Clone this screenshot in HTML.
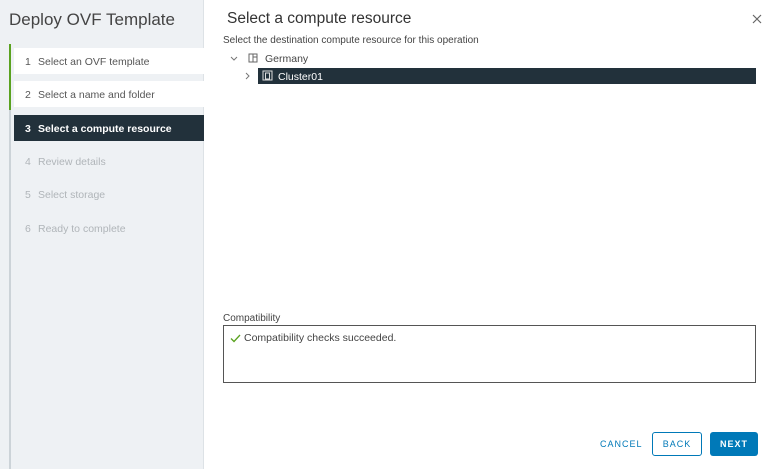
<!DOCTYPE html>
<html><head><style>
*{margin:0;padding:0;box-sizing:border-box}
body{width:768px;height:469px;overflow:hidden;font-family:"Liberation Sans",sans-serif;background:#fff;position:relative;color:#333}
.side{position:absolute;left:0;top:0;width:204px;height:469px;background:#eef1f4;border-right:1px solid #dde2e6}
.side h1{position:absolute;left:9px;top:10px;font-size:17px;font-weight:normal;color:#444}
.rail{position:absolute;left:9px;top:44px;width:2px;height:425px;background:#ccd3d8}
.rail2{position:absolute;left:9px;top:44px;width:2px;height:66px;background:#5aa220}
.st{position:absolute;left:14px;width:190px;height:26px;font-size:10.5px;line-height:28px;padding-left:11px;color:#565656}
.st span{display:inline-block;width:13px}
.st.w{background:#fff}
.st.a{background:#22313b;color:#fff;font-weight:bold}
.st.d{color:#b0b5b9}
.t{position:absolute;font-size:10.5px;color:#444}
</style></head><body>
<div class="side">
<h1>Deploy OVF Template</h1>
<div class="rail"></div><div class="rail2"></div>
<div class="st w" style="top:48px"><span>1</span>Select an OVF template</div>
<div class="st w" style="top:81px"><span>2</span>Select a name and folder</div>
<div class="st a" style="top:115px"><span>3</span>Select a compute resource</div>
<div class="st d" style="top:148px"><span>4</span>Review details</div>
<div class="st d" style="top:181px"><span>5</span>Select storage</div>
<div class="st d" style="top:215px"><span>6</span>Ready to complete</div>
</div>
<div class="t" style="left:227px;top:10px;font-size:15.5px;color:#333">Select a compute resource</div>
<svg style="position:absolute;left:752px;top:14px" width="10" height="10"><path d="M1 1L9 9M9 1L1 9" stroke="#666" stroke-width="1.2"/></svg>
<div class="t" style="left:223px;top:35px;font-size:10px">Select the destination compute resource for this operation</div>
<svg style="position:absolute;left:230px;top:56px" width="8" height="6"><path d="M1 1L4 4L7 1" stroke="#777" fill="none"/></svg>
<svg style="position:absolute;left:248px;top:53px" width="10" height="10"><rect x="1" y="1" width="8" height="8" fill="none" stroke="#666"/><path d="M5 1V9M5 4H9" stroke="#666"/></svg>
<div class="t" style="left:265px;top:53px">Germany</div>
<svg style="position:absolute;left:245px;top:72px" width="6" height="8"><path d="M1 1L4 4L1 7" stroke="#777" fill="none"/></svg>
<div style="position:absolute;left:258px;top:68px;width:498px;height:16px;background:#22313b"></div>
<svg style="position:absolute;left:262px;top:70px" width="11" height="11"><rect x="1" y="1" width="9" height="9" fill="none" stroke="#ddd"/><rect x="3.5" y="3" width="4" height="6" fill="none" stroke="#ddd"/></svg>
<div class="t" style="left:278px;top:71px;color:#fff">Cluster01</div>
<div class="t" style="left:223px;top:313px;font-size:10px">Compatibility</div>
<div style="position:absolute;left:223px;top:325px;width:533px;height:58px;border:1px solid #555"></div>
<svg style="position:absolute;left:230px;top:334px" width="11" height="9"><path d="M1 4.5L4 7.5L10 1" stroke="#5aa220" fill="none" stroke-width="1.3"/></svg>
<div class="t" style="left:244px;top:332px">Compatibility checks succeeded.</div>
<div class="t" style="left:600px;top:439px;font-size:9px;color:#0079b8;letter-spacing:1px">CANCEL</div>
<div style="position:absolute;left:652px;top:432px;width:50px;height:24px;border:1px solid #0079b8;border-radius:3px;font-size:9px;color:#0079b8;letter-spacing:1px;text-align:center;line-height:22px">BACK</div>
<div style="position:absolute;left:710px;top:432px;width:48px;height:24px;background:#0079b8;border-radius:3px;font-size:9px;color:#fff;font-weight:bold;letter-spacing:1px;text-align:center;line-height:24px">NEXT</div>
</body></html>
